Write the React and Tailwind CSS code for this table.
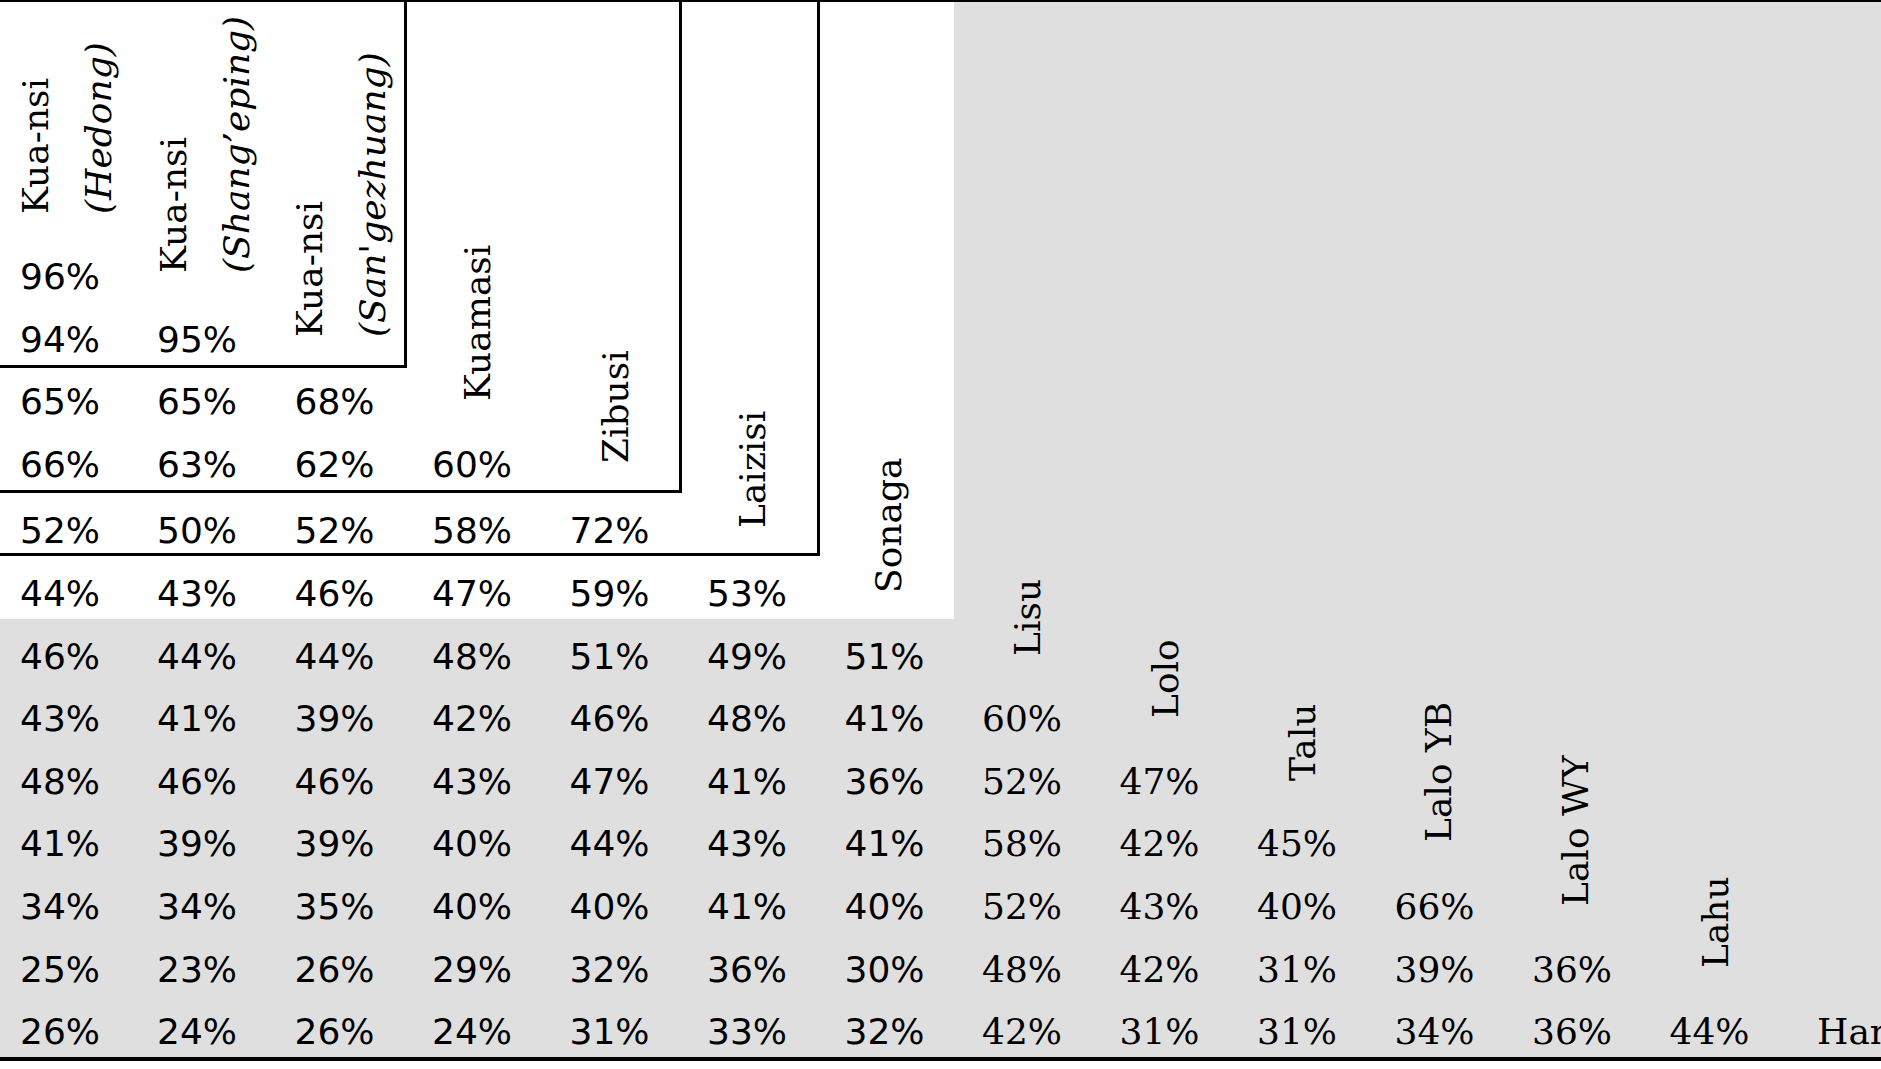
import React from 'react';

const sans = "font-['DejaVu_Sans',sans-serif]";
const serif = "font-['DejaVu_Serif',serif]";

// diagonal headers, rotated; pos places the bottom-left anchor inside the diagonal cell
const headers = [
  { lines: ['Kua-nsi', '(Hedong)'], pos: 'left-[4px] top-[33px]' },
  { lines: ['Kua-nsi', '(Shang’eping)'], pos: 'left-[13px] top-[30px]' },
  { lines: ['Kua-nsi', "(San'gezhuang)"], pos: 'left-[11px] top-[31px]' },
  { lines: ['Kuamasi'], pos: 'left-[42px] top-[33px]' },
  { lines: ['Zibusi'], pos: 'left-[42px] top-[32px]' },
  { lines: ['Laizisi'], pos: 'left-[42px] top-[35px]' },
  { lines: ['Sonaga'], pos: 'left-[40px] top-[37px]' },
  { lines: ['Lisu'], pos: 'left-[42px] top-[37px]' },
  { lines: ['Lolo'], pos: 'left-[42px] top-[37px]' },
  { lines: ['Talu'], pos: 'left-[42px] top-[37px]' },
  { lines: ['Lalo YB'], pos: 'left-[40px] top-[36px]' },
  { lines: ['Lalo WY'], pos: 'left-[40px] top-[37px]' },
  { lines: ['Lahu'], pos: 'left-[42px] top-[36px]' },
];

const values = [
  [],
  [96],
  [94, 95],
  [65, 65, 68],
  [66, 63, 62, 60],
  [52, 50, 52, 58, 72],
  [44, 43, 46, 47, 59, 53],
  [46, 44, 44, 48, 51, 49, 51],
  [43, 41, 39, 42, 46, 48, 41, 60],
  [48, 46, 46, 43, 47, 41, 36, 52, 47],
  [41, 39, 39, 40, 44, 43, 41, 58, 42, 45],
  [34, 34, 35, 40, 40, 41, 40, 52, 43, 40, 66],
  [25, 23, 26, 29, 32, 36, 30, 48, 42, 31, 39, 36],
  [26, 24, 26, 24, 31, 33, 32, 42, 31, 31, 34, 36, 44],
];

const COLS = 14;

// r = -1 is the blank band above the first row
function cellClass(r, c) {
  const parts = [r <= 6 && c <= 6 ? 'bg-white' : 'bg-[#dfdfdf]'];
  if ((c === 3 && r <= 2) || (c === 5 && r <= 4) || (c === 6 && r <= 5)) parts.push('border-l-[3px] border-l-black');
  if ((r === 2 && c <= 2) || (r === 4 && c <= 4) || (r === 5 && c <= 5)) parts.push('border-b-[3px] border-b-black');
  return parts.join(' ');
}

const Header = ({ h }) => (
  <div
    className={`absolute z-10 origin-top-left -rotate-90 whitespace-nowrap text-[36px] leading-[63px] text-black ${serif} ${h.pos}`}
  >
    {h.lines.map((line, i) => (
      <div key={i} className={i ? 'italic' : ''}>{line}</div>
    ))}
  </div>
);

const App = () => {
  const cells = [];

  for (let c = 0; c < COLS; c++) {
    cells.push(<div key={`top-${c}`} className={cellClass(-1, c)} />);
  }

  for (let r = 0; r < values.length; r++) {
    // the boxed rows sit a little higher in the source
    const top = r <= 4 ? 'pt-[10px]' : 'pt-[14px]';
    for (let c = 0; c < COLS; c++) {
      const base = cellClass(r, c);
      const font = c <= 6 ? sans : serif;
      const pad = c === 0 ? 'pl-[20px]' : 'pl-[28px]';

      if (c < r) {
        cells.push(
          <div key={`${r}-${c}`} className={`${base} ${font} ${pad} ${top} text-[36px] leading-[48px] whitespace-nowrap text-black`}>
            {values[r][c]}%
          </div>
        );
      } else if (c === r && c < headers.length) {
        cells.push(
          <div key={`${r}-${c}`} className={`${base} relative`}>
            <Header h={headers[c]} />
          </div>
        );
      } else if (c === r) {
        cells.push(
          <div key={`${r}-${c}`} className={`${base} ${serif} pl-[38px] pt-[14px] text-[36px] leading-[48px] whitespace-nowrap text-black`}>
            Hani
          </div>
        );
      } else {
        cells.push(<div key={`${r}-${c}`} className={base} />);
      }
    }
  }

  return (
    <div className="w-[1881px] h-[1069px] overflow-hidden bg-white">
      <div className="grid w-max grid-cols-[129px_repeat(13,137.5px)] grid-rows-[178.5px_repeat(14,62.6px)] border-t-2 border-b-4 border-black">
        {cells}
      </div>
    </div>
  );
};

export default App;
